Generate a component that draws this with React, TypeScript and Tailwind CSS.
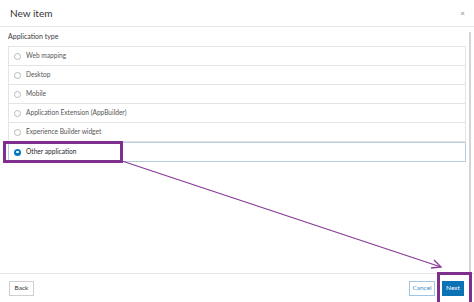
import React from "react";

const items = [
  "Web mapping",
  "Desktop",
  "Mobile",
  "Application Extension (AppBuilder)",
  "Experience Builder widget",
  "Other application",
];

export default function App() {
  return (
    <div
      className="relative w-[474px] h-[302px] bg-white overflow-hidden flex flex-col text-[#323232]"
      style={{ fontFamily: "Lato, 'Open Sans', sans-serif" }}
    >
      <div className="h-[27px] shrink-0 flex items-center justify-between pl-[10px] pr-[9px] border-b border-[#e8e8e8]">
        <span className="text-[10px] text-[#333333]">New item</span>
        <span className="text-[8px] text-[#8a8a8a] leading-none">×</span>
      </div>
      <div className="flex-1 flex flex-row pl-[8px] pr-[2px]">
        <div className="flex-1 flex flex-col">
          <div className="h-[19px] flex items-center text-[7px] text-[#3a3a3a]">Application type</div>
          <div className="border-t border-[#e4e4e4] flex flex-col">
            {items.map((it, i) => {
              const sel = i === items.length - 1;
              return (
                <div
                  key={it}
                  className={
                    sel
                      ? "h-[20px] flex items-center pl-[5px] border border-[#b6cde0] bg-white"
                      : "h-[19px] flex items-center pl-[5px] border-x border-b border-[#e4e4e4]"
                  }
                >
                  {sel ? (
                    <span className="w-[7px] h-[7px] rounded-full bg-[#0079c1] flex items-center justify-center">
                      <span className="w-[2.5px] h-[2.5px] rounded-full bg-white" />
                    </span>
                  ) : (
                    <span className="w-[7px] h-[7px] rounded-full border border-[#b8b8b8] bg-white" />
                  )}
                  <span className={sel ? "ml-[5px] text-[6.6px] text-[#1f1f1f]" : "ml-[5px] text-[6.6px] text-[#555555]"}>{it}</span>
                </div>
              );
            })}
          </div>
        </div>
        <div className="ml-[3px] mr-[1px] mt-[5px] w-[2px] bg-[#d4d4d4]" />
      </div>
      <div className="h-[29px] shrink-0 border-t border-[#e4e4e4] flex items-center justify-between pl-[9px] pr-[10px]">
        <button className="h-[15px] w-[25px] border border-[#d0d0d0] bg-white text-[6.5px] text-[#333] flex items-center justify-center">
          Back
        </button>
        <div className="flex items-center gap-[7px]">
          <button className="h-[15px] w-[26px] border border-[#9fc6e2] bg-white text-[6.5px] text-[#4a8cc4] flex items-center justify-center">
            Cancel
          </button>
          <button className="h-[15px] w-[22px] bg-[#0b72b5] text-[6.5px] text-white flex items-center justify-center">
            Next
          </button>
        </div>
      </div>

      <div className="absolute left-[3px] top-[141px] w-[120px] h-[22px] border-[3.5px] border-[#7e2f8e]" />
      <div className="absolute left-[437px] top-[272px] w-[35px] h-[34px] border-[3.5px] border-[#7e2f8e]" />
      <svg className="absolute left-0 top-0 pointer-events-none" width="474" height="302" viewBox="0 0 474 302">
        <line x1="122" y1="161" x2="441" y2="267" stroke="#8a3a9a" strokeWidth="1.3" />
        <polyline points="434,260 441,267 431,268" fill="none" stroke="#8a3a9a" strokeWidth="1.3" />
      </svg>
    </div>
  );
}
